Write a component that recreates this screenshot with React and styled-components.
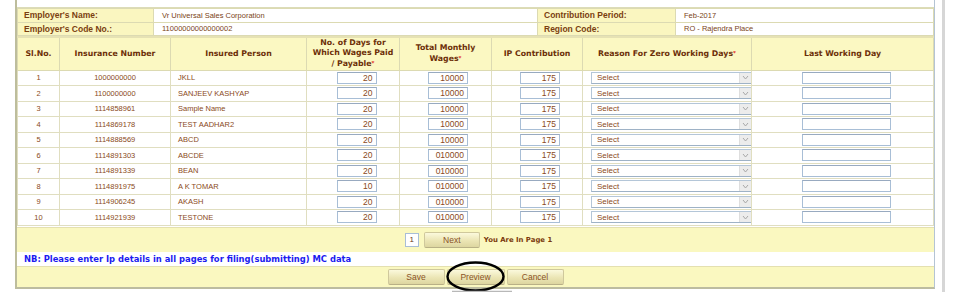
import styled, { createGlobalStyle } from 'styled-components'

const GlobalStyle = createGlobalStyle`
  body {
    margin: 0;
    background: #fff;
    font-family: "Liberation Sans", Arial, sans-serif;
  }
`

const rows = [
  [1, '1000000000', 'JKLL', '20', '10000'],
  [2, '1100000000', 'SANJEEV KASHYAP', '20', '10000'],
  [3, '1114858961', 'Sample Name', '20', '10000'],
  [4, '1114869178', 'TEST AADHAR2', '20', '10000'],
  [5, '1114888569', 'ABCD', '20', '10000'],
  [6, '1114891303', 'ABCDE', '20', '010000'],
  [7, '1114891339', 'BEAN', '20', '010000'],
  [8, '1114891975', 'A K TOMAR', '10', '010000'],
  [9, '1114906245', 'AKASH', '20', '010000'],
  [10, '1114921939', 'TESTONE', '20', '010000'],
]

const Chevron = () => (
  <svg width="7" height="5" viewBox="0 0 7 5">
    <polyline points="1,1 3.5,4 6,1" fill="none" stroke="#a8a8a8" strokeWidth="1" />
  </svg>
)

export default function App() {
  return (
    <Page>
      <GlobalStyle />
      <Panel>
        <TopStrip />
        <InfoTable>
          <tbody>
            <tr>
              <Label $w={136}>Employer's Name:</Label>
              <Value $w={384}>Vr Universal Sales Corporation</Value>
              <Label $w={138}>Contribution Period:</Label>
              <Value>Feb-2017</Value>
            </tr>
            <tr>
              <Label>Employer's Code No.:</Label>
              <Value>11000000000000002</Value>
              <Label>Region Code:</Label>
              <Value>RO - Rajendra Place</Value>
            </tr>
          </tbody>
        </InfoTable>
        <Grid>
          <thead>
            <tr>
              <Head $w={42}>Sl.No.</Head>
              <Head $w={111}>Insurance Number</Head>
              <Head $w={136}>Insured Person</Head>
              <Head $w={93}>No. of Days for Which Wages Paid / Payable<Star>*</Star></Head>
              <Head $w={92}>Total Monthly<br />Wages<Star>*</Star></Head>
              <Head $w={91}>IP Contribution</Head>
              <Head $w={169}>Reason For Zero Working Days<Star>*</Star></Head>
              <Head>Last Working Day</Head>
            </tr>
          </thead>
          <tbody>
            {rows.map(([no, ins, name, days, wages]) => (
              <Row key={no}>
                <Cell $align="center">{no}</Cell>
                <Cell $align="center">{ins}</Cell>
                <Cell $pad="7px">{name}</Cell>
                <Cell $align="center"><NumBox $shift={7}>{days}</NumBox></Cell>
                <Cell $align="center"><NumBox $shift={5}>{wages}</NumBox></Cell>
                <Cell $align="center"><NumBox $shift={6}>{'175'}</NumBox></Cell>
                <Cell $pad="8px">
                  <SelectBox>
                    <span>Select</span>
                    <Arrow><Chevron /></Arrow>
                  </SelectBox>
                </Cell>
                <Cell $align="center"><DateBox /></Cell>
              </Row>
            ))}
          </tbody>
        </Grid>
        <PagerRow>
          <PageBox>1</PageBox>
          <Btn $w={56}>Next</Btn>
          <PageText>You Are In Page 1</PageText>
        </PagerRow>
        <NoteRow>NB: Please enter Ip details in all pages for filing(submitting) MC data</NoteRow>
        <ActionRow>
          <Btn $w={57}>Save</Btn>
          <Marked>
            <Btn $w={58}>Preview</Btn>
            <Ring width="68" height="33" viewBox="0 0 68 33">
              <ellipse cx="29.5" cy="15.5" rx="28" ry="14" fill="none" stroke="#000" strokeWidth="2.4" />
              <line x1="6" y1="30.5" x2="66" y2="30.5" stroke="#b8b8b8" strokeWidth="1.4" />
            </Ring>
          </Marked>
          <Btn $w={57}>Cancel</Btn>
        </ActionRow>
      </Panel>
      <SideLine />
    </Page>
  )
}

const Page = styled.div`
  display: flex;
  align-items: flex-start;
  padding-left: 15px;
`

const Panel = styled.div`
  width: 917px;
  border-left: 2px solid #bdbd9c;
  border-right: 1px solid #b4c4d4;
  border-bottom: 2px solid #bcbca0;
`

const SideLine = styled.div`
  width: 3px;
  height: 292px;
  margin-left: 7px;
  background: #d6d6d6;
`

const TopStrip = styled.div`
  height: 7px;
  border-bottom: 1px solid #dcdcb8;
`

const InfoTable = styled.table`
  width: 100%;
  border-collapse: collapse;
  table-layout: fixed;
  tr {
    height: 13.5px;
  }
`

const Label = styled.td`
  ${p => p.$w && `width: ${p.$w}px;`}
  box-sizing: border-box;
  background: #faf6c0;
  border: 1px solid #dcdab2;
  padding: 0 0 0 6px;
  font-size: 8.5px;
  font-weight: bold;
  color: #7a3f10;
  white-space: nowrap;
`

const Value = styled.td`
  ${p => p.$w && `width: ${p.$w}px;`}
  box-sizing: border-box;
  background: #fff;
  border: 1px solid #dcdab2;
  padding: 0 0 0 8px;
  font-size: 7.5px;
  color: #7a4420;
  white-space: nowrap;
`

const Grid = styled.table`
  width: 100%;
  border-collapse: collapse;
  table-layout: fixed;
  border-right: 1px solid #94563c;
  border-bottom: 1px solid #94563c;
`

const Head = styled.th`
  ${p => p.$w && `width: ${p.$w}px;`}
  box-sizing: border-box;
  height: 33px;
  padding: 0 3px;
  background: #fbf8c2;
  border: 1px solid #dcdab2;
  border-top: 2px solid #e6e2b4;
  font-family: "DejaVu Sans", Verdana, sans-serif;
  font-size: 7.8px;
  line-height: 10px;
  font-weight: bold;
  color: #6c2f08;
  text-align: center;
`

const Star = styled.span`
  color: #e21b1b;
  font-size: 5.5px;
  vertical-align: 1px;
`

const Row = styled.tr`
  height: 15.5px;
`

const Cell = styled.td`
  box-sizing: border-box;
  padding: 0 0 0 ${p => p.$pad || '0'};
  border: 1px solid #e0dec0;
  background: #fff;
  text-align: ${p => p.$align || 'left'};
  font-size: 7.5px;
  color: #8a4a22;
  white-space: nowrap;
`

const NumBox = styled.div`
  display: inline-block;
  box-sizing: border-box;
  width: 40px;
  height: 12px;
  margin-left: ${p => p.$shift}px;
  padding: 0 3px;
  border: 1px solid #a8bed6;
  border-top-color: #98aac0;
  text-align: right;
  font-size: 8.5px;
  line-height: 10px;
  color: #8a4a22;
  vertical-align: middle;
`

const SelectBox = styled.div`
  display: flex;
  align-items: center;
  justify-content: space-between;
  box-sizing: border-box;
  width: 161px;
  height: 12px;
  padding-left: 5px;
  border: 1px solid #b4c6d8;
  border-bottom-color: #9eb2c6;
  font-size: 8px;
  color: #8a4a22;
`

const Arrow = styled.span`
  display: flex;
  align-items: center;
  justify-content: center;
  width: 11px;
  height: 100%;
  background: #ececec;
  border-left: 1px solid #dedede;
`

const DateBox = styled.div`
  display: inline-block;
  box-sizing: border-box;
  width: 89px;
  height: 12px;
  margin-left: 7px;
  border: 1px solid #a8bed6;
  border-top-color: #98aac0;
  vertical-align: middle;
`

const PagerRow = styled.div`
  display: flex;
  align-items: center;
  justify-content: center;
  gap: 5px;
  height: 24px;
  margin-top: 1px;
  background: #faf8c0;
  border-top: 1px solid #e4e0b0;
`

const PageBox = styled.div`
  box-sizing: border-box;
  width: 14px;
  height: 14px;
  margin-left: 6px;
  border: 1px solid #a8bed6;
  background: #fff;
  text-align: center;
  font-size: 8px;
  line-height: 12px;
  color: #6c3a14;
`

const PageText = styled.span`
  margin-left: -1px;
  font-family: "DejaVu Sans", Verdana, sans-serif;
  font-size: 6.9px;
  font-weight: bold;
  color: #7a3a0c;
`

const Btn = styled.button`
  box-sizing: border-box;
  width: ${p => p.$w}px;
  height: 16px;
  padding: 0;
  border: 1px solid #cfc89c;
  border-bottom-color: #b8b086;
  border-radius: 2px;
  background: linear-gradient(#fbf9dc, #ebe5b4 55%, #ddd6a0);
  font-family: "Liberation Sans", Arial, sans-serif;
  font-size: 8.5px;
  color: #8a5226;
  cursor: pointer;
`

const NoteRow = styled.div`
  height: 14px;
  padding-left: 7px;
  background: #fff;
  font-family: "DejaVu Sans", Verdana, sans-serif;
  font-size: 8.4px;
  line-height: 14px;
  font-weight: bold;
  color: #1c1cf0;
  white-space: nowrap;
`

const ActionRow = styled.div`
  display: flex;
  align-items: center;
  justify-content: center;
  gap: 2px;
  height: 20px;
  background: #faf8c0;
  border-top: 1px solid #e4e0b0;
`

const Marked = styled.span`
  position: relative;
  display: flex;
`

const Ring = styled.svg`
  position: absolute;
  left: -1px;
  top: -8px;
  pointer-events: none;
`
